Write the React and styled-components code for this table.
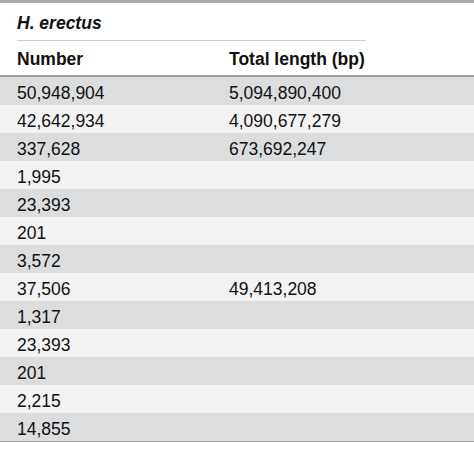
import React from 'react';
import styled, { createGlobalStyle } from 'styled-components';

const GlobalStyle = createGlobalStyle`
  body {
    margin: 0;
    background: #fff;
    font-family: "Liberation Sans", Arial, sans-serif;
    color: #111;
  }
`;

const TableWrap = styled.div`
  width: 474px;
  border-top: 3px solid #aaaaaa;
`;

const Title = styled.div`
  height: 37px;
  padding-left: 17px;
  box-sizing: border-box;
  padding-top: 10px;
  font-size: 17.5px;
  line-height: 20px;
  font-weight: bold;
  font-style: italic;
`;

const TitleRule = styled.div`
  margin-left: 17px;
  width: 349px;
  height: 1px;
  background: #cfcfcf;
`;

const Row = styled.div`
  display: grid;
  grid-template-columns: 212px 1fr;
  padding-left: 17px;
  height: ${(p) => p.$height || 28}px;
  box-sizing: border-box;
  padding-top: ${(p) => p.$top || 4}px;
  line-height: 24px;
  font-size: 17.5px;
  font-weight: ${(p) => (p.$head ? 'bold' : 'normal')};
  background: ${(p) => (p.$head ? '#fff' : p.$dark ? '#dcdddf' : '#f3f3f3')};
  border-bottom: ${(p) => (p.$head ? '2px solid #9f9f9f' : 'none')};
`;

const BottomRule = styled.div`
  height: 1px;
  background: #a8a8a8;
`;

const rows = [
  ['50,948,904', '5,094,890,400'],
  ['42,642,934', '4,090,677,279'],
  ['337,628', '673,692,247'],
  ['1,995', ''],
  ['23,393', ''],
  ['201', ''],
  ['3,572', ''],
  ['37,506', '49,413,208'],
  ['1,317', ''],
  ['23,393', ''],
  ['201', ''],
  ['2,215', ''],
  ['14,855', ''],
];

const App = () => (
  <>
    <GlobalStyle />
    <TableWrap>
      <Title>H. erectus</Title>
      <TitleRule />
      <Row $head $height={36} $top={6}>
        <span>Number</span>
        <span>Total length (bp)</span>
      </Row>
      {rows.map((r, i) => (
        <Row key={i} $dark={i % 2 === 0}>
          <span>{r[0]}</span>
          <span>{r[1]}</span>
        </Row>
      ))}
      <BottomRule />
    </TableWrap>
  </>
);

export default App;
